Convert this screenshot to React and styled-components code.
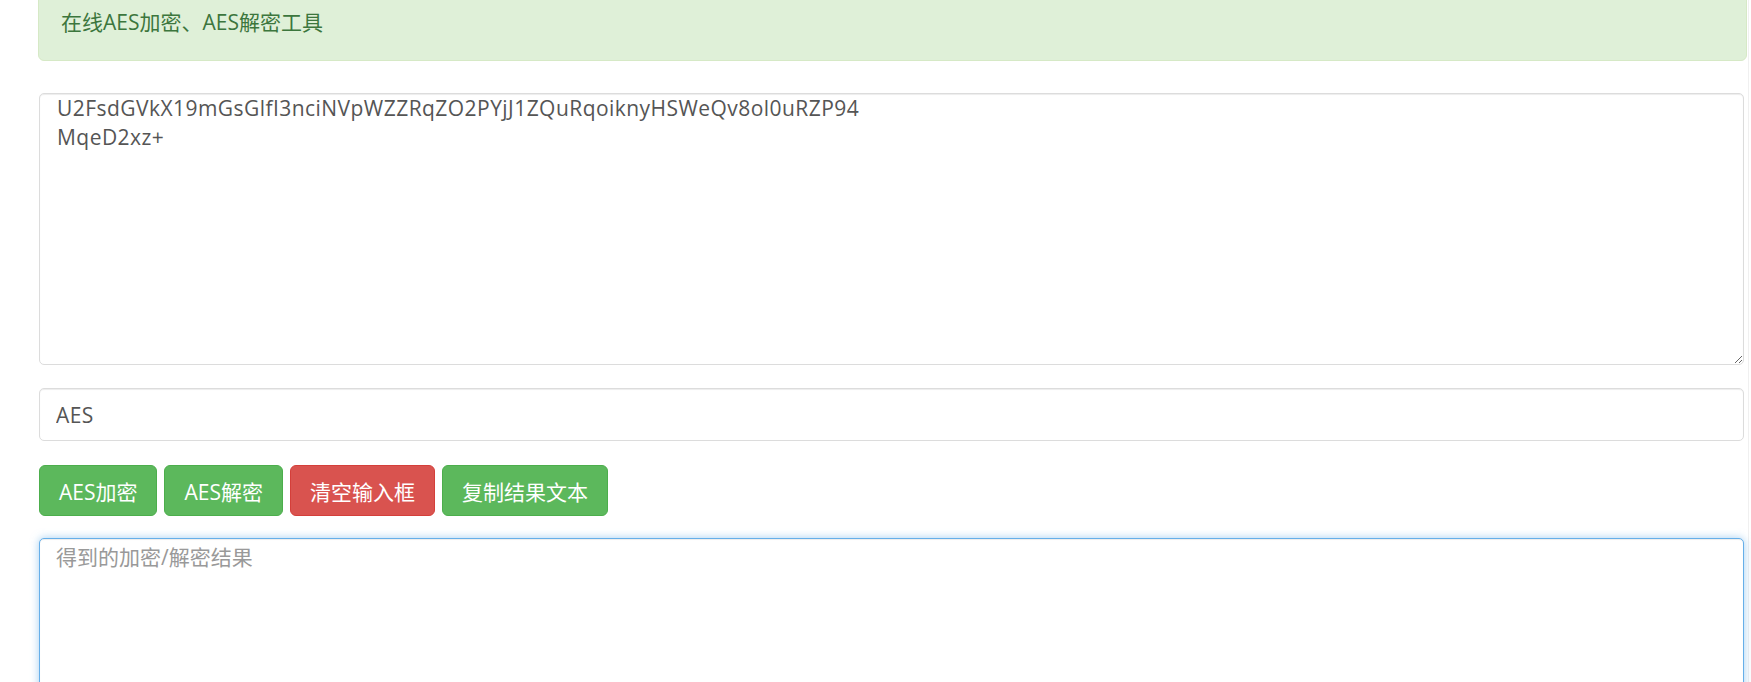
import React from 'react';
import styled, { createGlobalStyle } from 'styled-components';

const GlobalStyle = createGlobalStyle`
  body {
    margin: 0;
    background: #fff;
    font-family: "Open Sans", "Noto Sans CJK SC", sans-serif;
    overflow: hidden;
  }
`;

const Page = styled.div`
  box-sizing: border-box;
  margin-top: -11px;
  padding: 0 1px 0 38px;
  border-right: 1px solid #f0f0f0;
  width: 1749px;
  min-height: 700px;
`;

const Alert = styled.div`
  background: #dff0d8;
  border: 1px solid #d6e9c6;
  border-radius: 6px;
  color: #3c763d;
  padding: 17px 22px 23px;
  font-size: 21px;
  line-height: 30px;
`;

const Form = styled.div`
  margin: 32px 3px 0 1px;
`;

const TextArea = styled.textarea`
  display: block;
  box-sizing: border-box;
  width: 100%;
  height: 272px;
  margin: 0;
  padding: ${(p) => (p.$result ? '4px 16px' : '0 17px')};
  border: 1px solid ${(p) => (p.$result ? '#66afe9' : '#dcdcdc')};
  border-radius: 5px;
  background: #fff;
  color: #555;
  font-family: inherit;
  font-size: 21px;
  line-height: 29px;
  letter-spacing: ${(p) => (p.$result ? '0' : '0.45px')};
  outline: none;
  box-shadow: ${(p) =>
    p.$result
      ? 'inset 0 1px 1px rgba(0,0,0,.075), 0 0 8px rgba(102,175,233,.6)'
      : 'inset 0 1px 1px rgba(0,0,0,.075)'};
  &::placeholder {
    color: #999;
  }
`;

const Input = styled.input`
  display: block;
  box-sizing: border-box;
  width: 100%;
  height: 53px;
  margin: 23px 0 0;
  padding: 0 16px;
  border: 1px solid #dcdcdc;
  border-radius: 5px;
  color: #555;
  font-family: inherit;
  font-size: 21px;
  letter-spacing: 0.4px;
  outline: none;
  box-shadow: inset 0 1px 1px rgba(0,0,0,.075);
`;

const ButtonRow = styled.div`
  display: flex;
  gap: 7px;
  margin: 24px 0 22px;
`;

const Button = styled.button`
  height: 51px;
  padding: 0 19px;
  border: 1px solid ${(p) => (p.$danger ? '#d43f3a' : '#4cae4c')};
  border-radius: 6px;
  background: ${(p) => (p.$danger ? '#d9534f' : '#5cb85c')};
  color: #fff;
  font-family: inherit;
  font-size: 21px;
  cursor: pointer;
`;

const cipher = 'U2FsdGVkX19mGsGlfI3nciNVpWZZRqZO2PYjJ1ZQuRqoiknyHSWeQv8ol0uRZP94\nMqeD2xz+';

export default function App() {
  return (
    <>
      <GlobalStyle />
      <Page>
        <Alert>在线AES加密、AES解密工具</Alert>
        <Form>
          <TextArea defaultValue={cipher} spellCheck />
          <Input defaultValue="AES" />
          <ButtonRow>
            <Button>AES加密</Button>
            <Button>AES解密</Button>
            <Button $danger>清空输入框</Button>
            <Button>复制结果文本</Button>
          </ButtonRow>
          <TextArea $result placeholder="得到的加密/解密结果" />
        </Form>
      </Page>
    </>
  );
}
